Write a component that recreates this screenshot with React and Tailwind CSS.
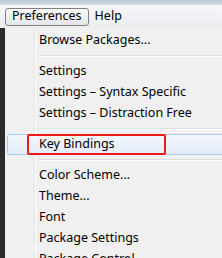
const FONT = { fontFamily: '"Noto Sans", "Noto Sans CJK SC", sans-serif' }

const ITEMS = [
  { label: 'Browse Packages...' },
  { sep: true },
  { label: 'Settings' },
  { label: 'Settings – Syntax Specific' },
  { label: 'Settings – Distraction Free' },
  { sep: true },
  { label: 'Key Bindings', active: true },
  { sep: true },
  { label: 'Color Scheme...' },
  { label: 'Theme...' },
  { label: 'Font' },
  { label: 'Package Settings' },
  { label: 'Package Control' },
]

function MenuRow({ item }) {
  if (item.sep) {
    return (
      <div className="h-[10px] shrink-0 flex flex-col justify-center pl-[31px]">
        <div className="h-px bg-[#e0e0e0]" />
        <div className="h-px bg-white" />
      </div>
    )
  }
  return (
    <div className="relative h-[21px] shrink-0 flex items-center">
      {item.active && (
        <div className="absolute inset-0 -right-2 rounded-[3px] border border-[#a8caf0] bg-gradient-to-b from-[#f3f7fc] to-[#e5edf8]" />
      )}
      <span className="relative pl-[32px] text-[12.5px] text-black leading-none">{item.label}</span>
      {item.active && (
        <div className="absolute left-[20px] top-0 w-[139px] h-[21px] border-2 border-[#f01818] rounded-[2px]" />
      )}
    </div>
  )
}

export default function App() {
  return (
    <div className="w-[222px] h-[258px] overflow-hidden bg-[#f0f0f0] flex flex-col" style={FONT}>
      <div className="h-[5px] shrink-0 bg-gradient-to-b from-[#bcc7d6] to-[#d3dbe5]" />
      <div className="h-[23px] shrink-0 flex items-center gap-[6px] pl-[5px] bg-gradient-to-b from-[#f5f6f8] to-[#eceef2]">
        <div className="h-[18px] px-[6px] flex items-center rounded-[3px] border border-[#7d7f84] bg-gradient-to-b from-[#fafafa] to-[#e4e6ea] text-[12.5px] text-black">
          Preferences
        </div>
        <div className="text-[12.5px] text-black">Help</div>
      </div>
      <div className="flex flex-1 min-h-0">
        <div className="w-[5px] shrink-0 bg-[#2b2b2b]" />
        <div className="flex-1 flex flex-col relative pl-[2px] pt-[2px]">
          <div className="absolute left-[29px] top-0 bottom-0 w-px bg-[#e2e3e3]" />
          <div className="absolute left-[30px] top-0 bottom-0 w-px bg-white" />
          {ITEMS.map((item, i) => (
            <MenuRow key={i} item={item} />
          ))}
        </div>
      </div>
    </div>
  )
}
